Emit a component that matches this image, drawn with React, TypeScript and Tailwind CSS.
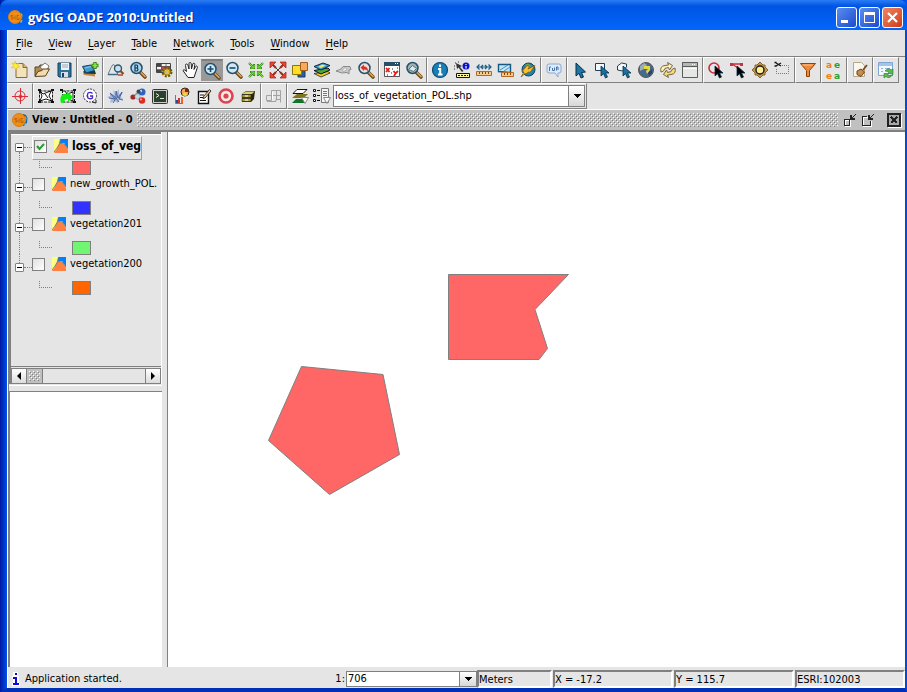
import { ReactNode, useState } from "react";

interface ITool {
  label: string;
  icon: ReactNode;
  pressed?: boolean;
}

interface ILayer {
  name: string;
  color: string;
  active?: boolean;
}

const Lens = ({ children, tint = "#cfe8f3" }: { children?: ReactNode; tint?: string }): JSX.Element => (
  <>
    <path d="M12 12l5 5" stroke="#6b4a20" strokeWidth="3.600" strokeLinecap="round" />
    <path d="M12.500 12l4.500 4.500" stroke="#e0aa5c" strokeWidth="1.600" strokeLinecap="round" />
    <circle cx="8.500" cy="8" r="5.500" fill={tint} stroke="#24506b" strokeWidth="1.500" />
    {children}
  </>
);

const Cursor = ({ fill = "#1d6f9e" }: { fill?: string }): JSX.Element => (
  <path d="M9 6v10l2.500-2.300 2 4.300 2-1-2-4H17z" fill={fill} stroke="#0a2c44" strokeWidth=".8" />
);

const Logo = (): JSX.Element => (
  <svg viewBox="0 0 16 16" className="size-4 shrink-0" aria-hidden="true">
    <path d="M11 2l3 1 1.500 3-.5 5-3 3-3-1z" fill="#1c5f98" />
    <path d="M13 4l1.500 2-.5 3-1.500 1z" fill="#8fd0ee" />
    <circle cx="7" cy="8" r="6.500" fill="#f08c18" stroke="#d97c0c" />
    <path d="M5 6.500H3v1.500h2v2H3M7 6.500v4M11 6.500H9v4h2v-2" fill="none" stroke="#a85c08" strokeWidth=".8" />
    <path d="M12 13l2-2.500.500 1.500-1.500 2z" fill="#7ac4e6" />
  </svg>
);

const fileTools: ITool[] = [
  {
    label: "New project",
    icon: (
      <>
        <path d="M6 3.500h7l4 4v10H6z" fill="#f3e3bb" stroke="#8a6a35" />
        <path d="M13 3.500v4h4" fill="#d3b679" stroke="#8a6a35" />
        <path d="M5 1l1 3 3-1-1.500 2.500L9.500 7 7 7.500 6 10 4.500 7.500 1.500 8 3.500 5.500 2 3l2.500 1z" fill="#ffee3a" stroke="#d6b300" strokeWidth=".5" />
      </>
    ),
  },
  {
    label: "Open project",
    icon: (
      <>
        <path d="M3 16V7h4l1-2h3l5 1v4z" fill="#b18a4c" stroke="#5a4320" />
        <path d="M8 7l5-4 4 3-3 6z" fill="#fff" stroke="#777" />
        <path d="M3 16.500l3-5 4-1 1-1.500h6.500l-4 7z" fill="#f3dcab" stroke="#5a4320" />
      </>
    ),
  },
  {
    label: "Save project",
    icon: (
      <>
        <path d="M4 3h13v14H5l-1-1z" fill="#2f719b" stroke="#17415f" />
        <path d="M7 3h8v7H7z" fill="#eef3f5" />
        <path d="M8 5h6M8 7h6" stroke="#9ab" />
        <path d="M7 12h7v5H7z" fill="#d9dfe2" />
        <path d="M8 13h2v4H8z" fill="#17415f" />
      </>
    ),
  },
];

const addTools: ITool[] = [
  {
    label: "Add layer",
    icon: (
      <>
        <path d="M3 13l1 2 11 1.500v-2.500l-5-2z" fill="#c08a3c" />
        <path d="M3 12l2-2 10 1 1 3-11-.5z" fill="#163247" />
        <path d="M2.500 6.500L11 5l3.500 5.500L6 13z" fill="#3f9aca" stroke="#17415f" />
        <path d="M5 8l6-1.500" stroke="#8fcbe8" />
        <path d="M15 2v7M11.500 5.500h7" stroke="#3b8f17" strokeWidth="3.400" />
        <path d="M15 3v5M12.500 5.500h5" stroke="#93e34a" strokeWidth="1.600" />
      </>
    ),
  },
];

const locatorTools: ITool[] = [
  {
    label: "Locator map",
    icon: (
      <>
        <path d="M2 14.500l3-7 2-3 2 1 1 4 2 5z" fill="#e2e6e8" stroke="#707c82" />
        <path d="M2 14.500h10" stroke="#3e6d86" strokeWidth="1.500" />
        <path d="M12 15h5" stroke="#c0403a" strokeWidth="1.500" />
        <circle cx="12" cy="8.500" r="3.500" fill="#c4e2f0" stroke="#30566c" strokeWidth="1.400" />
        <path d="M14.500 11l3 3" stroke="#7c4f22" strokeWidth="2.200" />
      </>
    ),
  },
  {
    label: "Search by attribute",
    icon: (
      <Lens tint="#a9d6ec">
        <path d="M7 5v6h2q2-1.500 0-3H7h1.800q1.800-1.500 0-3z" fill="none" stroke="#123a5a" strokeWidth="1.200" />
      </Lens>
    ),
  },
];

const tableTools: ITool[] = [
  {
    label: "Table manager",
    icon: (
      <>
        <path d="M2.500 3.500h14v9h-14z" fill="#f1f1f1" stroke="#444" />
        <path d="M3 4h4v3H3zM3 10h4v2H3z" fill="#454545" />
        <path d="M7 6h9v3H7z" fill="#d9415a" />
        <path d="M3 6.500h13M3 9.500h13M7.500 4v8M12 4v8" stroke="#555" strokeWidth=".8" />
        <circle cx="13" cy="12" r="4.300" fill="none" stroke="#6f5a0c" strokeWidth="2.400" strokeDasharray="2 1.400" />
        <circle cx="13" cy="12" r="3.200" fill="#f0cf3a" stroke="#8d720e" />
        <circle cx="13" cy="12" r="1.200" fill="#fff" stroke="#8d720e" strokeWidth=".6" />
      </>
    ),
  },
];

const viewTools: ITool[] = [
  {
    label: "Pan",
    icon: (
      <path
        d="M8 17.500L4 12q-1.500-1.500-.5-2.200 1-.5 3 1.700L5.500 5.500q0-1.500 1-1.500t1.500 1.500l1 3.500V3.500Q9 2.500 10 2.500t1.200 1L11.500 9l1.300-5q.3-1 1.200-.8t.8 1.300L14 9.500l1.700-3q.6-.8 1.300-.3t.4 1.300L15.500 13l-1.500 4.500z"
        fill="#fff"
        stroke="#222"
      />
    ),
  },
  { label: "Zoom in", pressed: true, icon: <Lens><path d="M8.500 5v6M5.500 8h6" stroke="#144c74" strokeWidth="1.600" /></Lens> },
  { label: "Zoom out", icon: <Lens><path d="M5.500 8h6" stroke="#144c74" strokeWidth="1.600" /></Lens> },
  {
    label: "Zoom to full extent",
    icon: (
      <>
        <path d="M3 3l4 4M17 3l-4 4M3 17l4-4M17 17l-4-4M8 4v4H4M12 4v4h4M8 16v-4H4M12 16v-4h4" fill="none" stroke="#3c8f1c" strokeWidth="2.200" />
        <path d="M3 3l4 4M17 3l-4 4M3 17l4-4M17 17l-4-4M8 5v3H5M12 5v3h3M8 15v-3H5M12 15v-3h3" fill="none" stroke="#7fe23a" strokeWidth="1" />
      </>
    ),
  },
  {
    label: "Zoom to selection",
    icon: (
      <>
        <path d="M8 8l4 4M12 8l-4 4" stroke="#444" />
        <path d="M8 8L4 4m12 0l-4 4M8 12l-4 4m12 0l-4-4" stroke="#a32418" strokeWidth="2" />
        <path d="M2 2h6L2 8zM18 2h-6l6 6zM2 18h6l-6-6zM18 18h-6l6-6z" fill="#e8432f" stroke="#a32418" strokeWidth=".7" />
      </>
    ),
  },
  {
    label: "Zoom to layer",
    icon: (
      <>
        <path d="M8 10h7v7H8z" fill="#2560a4" stroke="#173c68" />
        <path d="M2.500 5.500h9v9h-9z" fill="#ffdf24" stroke="#8f7508" />
        <path d="M10.500 2.500h7v8h-7z" fill="#f9a95a" stroke="#a55f1c" />
      </>
    ),
  },
  {
    label: "Zoom manager",
    icon: (
      <>
        <path d="M2 13.500l7 3.500 9-4-2-1.500z" fill="#f0cb2c" stroke="#222" strokeWidth=".8" />
        <path d="M2 10.500l7 3.500 9-4-2-2z" fill="#4fa438" stroke="#112" />
        <path d="M2 6.500L11 3l7 2.500L9 10z" fill="#3e9bd0" stroke="#0d2840" />
        <path d="M6 7l4-2.500 4 1L9 8z" fill="#e9ea6a" />
      </>
    ),
  },
  {
    label: "Previous layer view",
    icon: (
      <>
        <path d="M2 11l5-2 2-2.500h7l1 3-2 .5v4l-2-1.500-5 .5z" fill="#cbcbcb" stroke="#8a8a8a" />
        <path d="M8 10.500l3-3 2 2-3 2z" fill="#eee" stroke="#999" strokeWidth=".7" />
      </>
    ),
  },
  {
    label: "Zoom previous",
    icon: <Lens tint="#f1dcda"><path d="M4.500 7.500l3.500-3v2q4 0 4 5-1.500-2.500-4-2v1.500z" fill="#d03525" /></Lens>,
  },
];

const locateTools: ITool[] = [
  {
    label: "Center view on a point",
    icon: (
      <>
        <path d="M2.500 3.500h15v13h-15z" fill="#fff" stroke="#555" />
        <path d="M2 2h16v4H2z" fill="#264e66" />
        <path d="M13 3h1v1h-1zM15 3h1v1h-1z" fill="#fff" />
        <path d="M4 8l3.500 4M7.500 8L4 12M11.500 11l2 2.500 2.500-2.500M13.500 13.500L12 16" stroke="#e31c1c" strokeWidth="1.800" fill="none" />
        <path d="M9 13h1M10 9h1M15 8h1M5 15h1" stroke="#222" />
      </>
    ),
  },
  {
    label: "Search place",
    icon: <Lens tint="#9db4bb"><path d="M4.500 9.500l4-4 4 3-3 3z" fill="#dfe9e6" stroke="#456" strokeWidth=".8" /></Lens>,
  },
];

const queryTools: ITool[] = [
  {
    label: "Info",
    icon: (
      <>
        <circle cx="10" cy="10" r="7.500" fill="#1880b8" stroke="#0c4a74" strokeWidth="1.200" />
        <path d="M10 4.500V7M8 9h2.200v5M8 14.500h4.500" stroke="#fff" strokeWidth="2" fill="none" />
      </>
    ),
  },
  {
    label: "Quick info",
    icon: (
      <>
        <path d="M4 3l1 6 1.500-1.500L10 12l1.500-1L8 7l2-1z" fill="#333" />
        <path d="M2 6h1M6 2h1M3 3h1M2 9h1" stroke="#222" />
        <circle cx="14" cy="6" r="3.500" fill="#0b12ce" />
        <path d="M14 4v1M14 6v2.500" stroke="#fff" strokeWidth="1.200" />
        <path d="M4.500 13.500h13v4h-13z" fill="#fff799" stroke="#111" />
        <path d="M6 15.500h10" stroke="#111" strokeDasharray="2 1" />
      </>
    ),
  },
  {
    label: "Measure distances",
    icon: (
      <>
        <path d="M3 7h14M5.500 4.500L3 7l2.500 2.500M14.500 4.500L17 7l-2.500 2.500M9 5L7 7l2 2M11 5l2 2-2 2" stroke="#195f89" strokeWidth="1.200" fill="none" />
        <path d="M2.500 11.500h15v4h-15z" fill="#f3c992" stroke="#b5681f" />
        <path d="M5.500 12v2M8.500 12v2M11.500 12v2M14.500 12v2" stroke="#8b4708" />
      </>
    ),
  },
  {
    label: "Measure area",
    icon: (
      <>
        <path d="M2.500 4.500h12v8l-12-1z" fill="#c4e7f7" stroke="#18587f" strokeWidth="1.400" />
        <path d="M4 10l8-5M8 11l6-4" stroke="#4096c4" />
        <path d="M5.500 12.500h12v4h-12z" fill="#f3c992" stroke="#b5681f" />
        <path d="M8.500 13v2M11.500 13v2M14.500 13v2" stroke="#8b4708" />
      </>
    ),
  },
  {
    label: "Hyperlink",
    icon: (
      <>
        <circle cx="10.500" cy="9.500" r="6.500" fill="#2680b0" stroke="#123e5a" />
        <path d="M7 5l3-1.500L13 6l-2 2z" fill="#6aa84a" />
        <path d="M3 17l3-5-2-.5 5-6 2.500 1-1.500 2.500 7-3.500-5 7-1.500-.5L8 14l-1-.5z" fill="#f9c22c" stroke="#83560b" strokeWidth=".8" />
      </>
    ),
  },
];

const chatTools: ITool[] = [
  {
    label: "Geocoding",
    icon: (
      <>
        <path d="M5 4h10q2 0 2 2v5q0 2-2 2h-1v4l-3-4H5q-2 0-2-2V6q0-2 2-2z" fill="#dceafb" stroke="#8ca9cf" />
        <path d="M7 7H5.500v4M8.500 8v2.500h2V7.500M12.500 10.500V7H14v3" stroke="#4971aa" fill="none" />
      </>
    ),
  },
];

const selectTools: ITool[] = [
  { label: "Select by point", icon: <path d="M6 3v13l3-2.700 2 4.700 2.500-1-2-4.500 4-.5z" fill="#1d76a6" stroke="#0a2c44" /> },
  { label: "Select by rectangle", icon: <><path d="M3.500 3.500h9v7h-9z" fill="#f6f9fb" stroke="#17415f" /><Cursor /></> },
  { label: "Select by polygon", icon: <><path d="M3.500 10V6l4-3 5 1v3l-4 4z" fill="#f6f9fb" stroke="#17415f" /><Cursor /></> },
  {
    label: "Select by layer",
    icon: (
      <>
        <circle cx="10" cy="10" r="7.500" fill="#47698a" stroke="#555" />
        <path d="M4 6l4-3 3 2-3 4-4 2z" fill="#98aebf" />
        <path d="M8 6h6v4l-3 4-1-3 2-2H8z" fill="#e9d83c" />
        <path d="M12 13l4-4v4l-3 3z" fill="#2d426b" />
      </>
    ),
  },
  {
    label: "Invert selection",
    icon: (
      <>
        <path d="M3 12q-1.500-6 4-6.500l3.500-.5-1-2.500 5 3-3 4.500-1-2.500Q6 7.500 5.500 11z" fill="#fff3b2" stroke="#766443" />
        <path d="M17 8q1.500 6-4 6.500l-3.500.5 1 2.500-5-3 3-4.500 1 2.500q4.500 0 5-3.500z" fill="#f6dd7a" stroke="#766443" />
      </>
    ),
  },
  {
    label: "Clear selection",
    icon: (
      <>
        <path d="M2.500 2.500h15v15h-15z" fill="#e6e8e5" stroke="#5a5e5c" />
        <path d="M2.500 2.500h15v4h-15z" fill="#b4b8b6" stroke="#5a5e5c" />
        <path d="M3 8.500h14" stroke="#fff" />
        <path d="M12 4.500h4" stroke="#fff" strokeDasharray="1 1" />
      </>
    ),
  },
];

const bufferTools: ITool[] = [
  { label: "Select by circle", icon: <><circle cx="8" cy="8" r="5" fill="none" stroke="#d22a3a" strokeWidth="1.600" /><Cursor fill="#000" /></> },
  {
    label: "Select by polyline",
    icon: (
      <>
        <path d="M14 4H4l9 6" fill="none" stroke="#d22a3a" strokeWidth="1.300" />
        <path d="M12 3h3v3h-3zM2 3h3v3H2z" fill="#c33540" />
        <Cursor fill="#000" />
      </>
    ),
  },
  {
    label: "Select by buffer",
    icon: (
      <>
        <path d="M10 2l3 3h2v2l3 3-3 3v2h-2l-3 3-3-3H5v-2l-3-3 3-3V5h2z" fill="#bd9550" stroke="#8b672b" />
        <circle cx="10" cy="10" r="4" fill="#ffed9a" stroke="#1d1a12" strokeWidth="1.400" />
      </>
    ),
  },
  {
    label: "Clip selection",
    icon: (
      <>
        <path d="M10 5.500h6.500v8h-12V9" fill="none" stroke="#777" strokeDasharray="1 1" />
        <path d="M4 3l5 3M4 6l5-3" stroke="#111" strokeWidth="1.200" />
        <path d="M2.500 2.500h2M2.500 6h2" stroke="#111" strokeWidth="1.600" />
      </>
    ),
  },
];

const filterTools: ITool[] = [
  {
    label: "Filter",
    icon: (
      <>
        <path d="M2.500 3.500h15l-6 7v6h-3v-6z" fill="#ef8a3a" stroke="#8a430b" />
        <path d="M4.500 5h10" stroke="#fbc391" />
      </>
    ),
  },
];

const labelTools: ITool[] = [
  {
    label: "Annotation",
    icon: (
      <g fontFamily="DejaVu Sans" fontWeight="700" fontSize="9">
        <text x="2" y="8" fill="#f57a14">a</text>
        <text x="10" y="8" fill="#2aa02b">e</text>
        <text x="2" y="19" fill="#f57a14">e</text>
        <text x="10" y="19" fill="#2aa02b">a</text>
      </g>
    ),
  },
];

const cleanTools: ITool[] = [
  {
    label: "Clean layer",
    icon: (
      <>
        <path d="M3.500 2.500h8l3 3v11h-11z" fill="#faf7ec" stroke="#b5a98a" />
        <path d="M17 5l-4 5" stroke="#7a4a1d" strokeWidth="1.800" />
        <path d="M7 11l4-2 3.500 3-3.500 4.500-4-2z" fill="#c68e4e" stroke="#6d411a" />
      </>
    ),
  },
];

const refreshTools: ITool[] = [
  {
    label: "Reload layer",
    icon: (
      <>
        <path d="M2.500 2.500h14v13h-14z" fill="#f3f8ff" stroke="#7fa5d2" />
        <path d="M3 3h13v3H3z" fill="#a4c5ea" />
        <path d="M5 8.500h2M5 11.500h2M9 8.500h5" stroke="#8fb0d8" />
        <path d="M9 11q4-4 6-1l2-1v4.500h-5l1-1.500q-2-1-4-1zM17 14.500q-4 5-7 2L8 18v-4.500h4.500l-1 1.500q2 1 5.500-.5z" fill="#5dbb56" stroke="#26762b" strokeWidth=".6" />
      </>
    ),
  },
];

const targetTools: ITool[] = [
  {
    label: "Georeference",
    icon: (
      <g fill="none" stroke="#dc2e36">
        <circle cx="10" cy="10" r="5" />
        <path d="M10.500 2v16M2 10.500h16" />
        <circle cx="10.500" cy="10.500" r="1.500" />
      </g>
    ),
  },
];

const topologyTools: ITool[] = [
  {
    label: "Topology",
    icon: (
      <>
        <path d="M3.500 5h12l1 1v9l-2 1h-11z" fill="#fff" stroke="#111" strokeDasharray="3 1" />
        <path d="M4 5l3 3 5-2 3-1-2 5 3 5-6-2-6 2 2-5zM9 8l3 4" stroke="#111" fill="none" />
        <path d="M2 4h3M15 4h3M2 16h3M15 16h3" stroke="#111" strokeWidth="2" />
      </>
    ),
  },
  {
    label: "Start route",
    icon: (
      <>
        <path d="M4.500 5h12v11h-12z" fill="#fff" stroke="#111" strokeDasharray="3 1" />
        <path d="M7 5l2 3 6-2v9l-5-2" fill="none" stroke="#111" />
        <path d="M2 4h3M15 4h3M15 16h3" stroke="#111" strokeWidth="2" />
        <path d="M3 17q-2-6 2-9h4V5l6 6-5 5v-3q-4 0-4 4z" fill="#11ef11" />
      </>
    ),
  },
  {
    label: "Graph",
    icon: (
      <>
        <circle cx="10" cy="9.500" r="6.500" fill="#fff" stroke="#333" strokeDasharray="2 1" />
        <path d="M12.500 7.500q-2-2-4.500-.5-1.500 2.500 0 5 2.500 1.500 4.500 0v-2H10" fill="none" stroke="#4824c8" strokeWidth="1.400" />
        <path d="M12 16l4 1v-3" stroke="#222" fill="none" />
      </>
    ),
  },
];

const extraTools: ITool[] = [
  {
    label: "Sextante",
    icon: (
      <>
        <path d="M4 7l4 2-1-5 3 3 3-4v5l4-2-3 5 3 1-4 2-1 3-4-2-4 2 1-4-4-2 3-1z" fill="#a9b8d6" />
        <path d="M3 12l6 1-5-6 6 5V5l2 7 4-6-3 7 4 1M7 17l3-5 3 4" stroke="#4a66a0" fill="none" />
      </>
    ),
  },
  {
    label: "Models",
    icon: (
      <>
        <path d="M5 11l7-6M8 11l6 3" stroke="#8899a5" strokeWidth="2" />
        <circle cx="14" cy="6" r="3.500" fill="#2c62c0" />
        <circle cx="13" cy="5" r="1.200" fill="#bcd3ef" />
        <circle cx="10.500" cy="5.500" r="2" fill="#39444c" />
        <circle cx="5" cy="11" r="2.600" fill="#a32a24" />
        <circle cx="9.500" cy="10.500" r="2.600" fill="#c9dbe8" stroke="#7f93a2" strokeWidth=".6" />
        <circle cx="14" cy="14.500" r="3.200" fill="#dd2b20" />
        <circle cx="13" cy="13.500" r="1" fill="#f8b6b0" />
      </>
    ),
  },
  {
    label: "Console",
    icon: (
      <>
        <rect x="2.500" y="3.500" width="15" height="14" rx="1" fill="#c9cdc5" stroke="#333" />
        <path d="M4 5h12v11H4z" fill="#2d4030" />
        <path d="M6 7.500l3 2-3 2M10 12.500h4" stroke="#d8eed2" fill="none" />
      </>
    ),
  },
  {
    label: "Charts",
    icon: (
      <>
        <circle cx="13" cy="6" r="4" fill="#f2a552" stroke="#222" />
        <path d="M13 6V2q4 0 4 4z" fill="#7c2c14" />
        <path d="M13 6l-3 3q3 2 6 0z" fill="#f6d14a" />
        <path d="M3.500 9v8.500H11" stroke="#777" fill="none" />
        <path d="M4 14h2v3H4z" fill="#214aa8" />
        <path d="M6 12h2v5H6z" fill="#d6301e" />
        <path d="M9 11h2v6H9z" fill="#e66a2b" />
      </>
    ),
  },
  {
    label: "Edit notes",
    icon: (
      <>
        <path d="M4.500 5.500h10v12h-10z" fill="#fff" stroke="#111" strokeWidth="1.400" />
        <path d="M6 9h4M6 11.500h3M6 14.500h6" stroke="#111" />
        <path d="M15.500 3.500l-6 7-.500 2 2-.500 6-7z" fill="#e6c987" stroke="#111" strokeWidth=".8" />
      </>
    ),
  },
  {
    label: "Snapping",
    icon: (
      <>
        <circle cx="10" cy="10" r="6.500" fill="#fbe9e9" stroke="#da4450" strokeWidth="2.600" />
        <circle cx="10" cy="10" r="2.600" fill="#da4450" />
      </>
    ),
  },
  {
    label: "Catalog",
    icon: (
      <>
        <path d="M4 8l4-3h9l-1 8-3 3H4z" fill="#2b280d" />
        <path d="M4 8l4-2.500h8.500L14 8z" fill="#d8cf7a" />
        <path d="M4 8.500h9v3H4zM4 12.500h9v3H4z" fill="#a89a2e" stroke="#222" strokeWidth=".6" />
        <path d="M7 10h3M7 14h3" stroke="#fff" />
      </>
    ),
  },
];

const disabledTools: ITool[] = [
  {
    label: "Layout",
    icon: (
      <>
        <path d="M7.500 4.500h9v12M12.500 4.500v9M7.500 4.500v10h-5v-5h5M8 9.500h8M3 15.500h9v-2h4" stroke="#a3a3a3" />
        <path d="M8.500 5.500v8" stroke="#fff" />
      </>
    ),
  },
];

const layerTools: ITool[] = [
  {
    label: "Active layer",
    icon: (
      <>
        <path d="M7 3.500h10l-4 4H3z" fill="#fff" stroke="#111" />
        <path d="M7 8h11l-4 4H2z" fill="#7f741c" />
        <path d="M6 13h9l-1 4H2z" fill="#137427" />
        <path d="M11.500 11.500h7L15 17.500z" fill="#fff" stroke="#888" />
      </>
    ),
  },
  {
    label: "Layer properties",
    icon: (
      <>
        <path d="M1.500 3.500h2v2h-2zM1.500 8.500h2v2h-2zM1.500 13.500h2v2h-2z" fill="#fff" stroke="#111" />
        <path d="M5 4.500h3M5 9.500h3M5 14.500h3" stroke="#111" />
        <path d="M9.500 2.500h7v14h-7z" fill="#f4f4f4" stroke="#777" />
        <path d="M11 5.500h4M11 7.500h4M11 9.500h4" stroke="#777" />
        <path d="M11.500 11.500h7L15 17.500z" fill="#fff" stroke="#888" />
      </>
    ),
  },
];

const topRow = [
  fileTools, addTools, locatorTools, tableTools, viewTools, locateTools, queryTools,
  chatTools, selectTools, bufferTools, filterTools, labelTools, cleanTools, refreshTools,
];
const bottomRow = [targetTools, topologyTools, extraTools, disabledTools];

const menus = ["File", "View", "Layer", "Table", "Network", "Tools", "Window", "Help"];

const layers: ILayer[] = [
  { name: "loss_of_vegetation_POL.shp", color: "#ff6666", active: true },
  { name: "new_growth_POL.shp", color: "#3333ff" },
  { name: "vegetation2010_POL.shp", color: "#70f670" },
  { name: "vegetation2009_POL.shp", color: "#ff6600" },
];
const shownNames = ["loss_of_veg", "new_growth_POL.", "vegetation201", "vegetation200"];

const ToolButton = ({ label, icon, pressed }: ITool): JSX.Element => (
  <button
    type="button"
    aria-label={label}
    className={`flex h-[22px] w-[22px] items-center justify-center ${pressed ? "border border-t-2 border-[#999] border-t-[#808080] bg-[#999]" : ""}`}
  >
    <svg viewBox="0 0 20 20" className="size-5 shrink-0" fill="none" aria-hidden="true">{icon}</svg>
  </button>
);

const ToolGroup = ({ tools, children }: { tools: ITool[]; children?: ReactNode }): JSX.Element => (
  <div className="flex h-[26px] shrink-0 items-center border border-white border-r-[#808080] border-b-[#808080] px-px">
    {tools.map(tool => <ToolButton key={tool.label} {...tool} />)}
    {children}
  </div>
);

const DownArrow = (): JSX.Element => (
  <svg viewBox="0 0 8 4" className="h-1 w-2" shapeRendering="crispEdges" aria-hidden="true">
    <path d="M0 0h8L4 4z" />
  </svg>
);

const Bumps = ({ id, className = "" }: { id: string; className?: string }): JSX.Element => (
  <svg className={className} shapeRendering="crispEdges" aria-hidden="true">
    <pattern id={id} width="4" height="4" patternUnits="userSpaceOnUse">
      <path d="M0 0h1v1H0zM2 2h1v1H2z" fill="#fff" />
      <path d="M1 1h1v1H1zM3 3h1v1H3z" fill="#808080" />
    </pattern>
    <rect width="100%" height="100%" fill={`url(#${id})`} />
  </svg>
);

const TitleBar = (): JSX.Element => (
  <header className="flex h-[30px] shrink-0 items-center rounded-t-lg bg-linear-to-b from-[#2a7df5] via-[#0054e3] via-20% to-[#0366fb] pt-1 pr-1 pl-2">
    <Logo />
    <h1 className="ml-1 flex-1 truncate font-['Open_Sans',sans-serif] text-[13px] leading-4 font-bold text-white [text-shadow:1px_1px_#0a1f8c]">
      gvSIG OADE 2010:Untitled
    </h1>
    <div className="flex gap-0.5">
      <button type="button" aria-label="Minimize" className="size-[21px] rounded-[3px] border border-white bg-linear-to-br from-[#5b8df2] to-[#1c49cc]">
        <svg viewBox="0 0 19 19" aria-hidden="true"><path d="M4 12h7v3H4z" fill="#fff" /></svg>
      </button>
      <button type="button" aria-label="Maximize" className="size-[21px] rounded-[3px] border border-white bg-linear-to-br from-[#5b8df2] to-[#1c49cc]">
        <svg viewBox="0 0 19 19" aria-hidden="true"><path d="M4 4h11v11H4zM5 7v7h9V7z" fill="#fff" fillRule="evenodd" /></svg>
      </button>
      <button type="button" aria-label="Close" className="size-[21px] rounded-[3px] border border-white bg-linear-to-br from-[#ee8462] to-[#d03a10]">
        <svg viewBox="0 0 19 19" aria-hidden="true"><path d="M5 5l9 9M14 5l-9 9" stroke="#fff" strokeWidth="2.200" /></svg>
      </button>
    </div>
  </header>
);

const ViewTitle = (): JSX.Element => (
  <div className="flex h-[23px] shrink-0 items-center border-t border-b-2 border-t-white border-b-[#808080] bg-[#c0c0c0] pr-[3px] pl-1">
    <Logo />
    <h2 className="ml-1 text-[11px] leading-4 font-bold">View : Untitled - 0</h2>
    <Bumps id="title-bumps" className="mx-1 h-3.5 min-w-0 flex-1" />
    <div className="flex items-center gap-0.5">
      <button type="button" aria-label="Minimize view">
        <svg viewBox="0 0 16 16" className="size-4" fill="none" shapeRendering="crispEdges" aria-hidden="true">
          <path d="M3.500 8.500h5v6h-5z" stroke="#fff" />
          <path d="M2.500 7.500h5v6h-5z" stroke="#222" strokeWidth="1.500" />
          <path d="M14 2L9 7M9 3v4h4" stroke="#222" strokeWidth="1.400" />
        </svg>
      </button>
      <button type="button" aria-label="Maximize view">
        <svg viewBox="0 0 16 16" className="size-4" fill="none" shapeRendering="crispEdges" aria-hidden="true">
          <path d="M8 5.500H3.500v9h8V9" stroke="#fff" />
          <path d="M7 4.500H2.500v9h8V9" stroke="#222" strokeWidth="1.500" />
          <path d="M14 2L9 7M9 3v4h4" stroke="#222" strokeWidth="1.400" />
        </svg>
      </button>
      <button type="button" aria-label="Close view" className="ml-2">
        <svg viewBox="0 0 16 16" className="size-4" fill="none" shapeRendering="crispEdges" aria-hidden="true">
          <path d="M2.500 2.500h13v13h-13z" stroke="#fff" />
          <path d="M2 2h12v12H2z" fill="#a8a8a8" stroke="#222" strokeWidth="2" />
          <path d="M5 5l6 6M11 5l-6 6" stroke="#222" strokeWidth="1.600" />
        </svg>
      </button>
    </div>
  </div>
);

const Checkbox = ({ label, checked, onChange }: { label: string; checked: boolean; onChange: () => void }): JSX.Element => (
  <span className="relative block size-[13px] shrink-0">
    <input
      type="checkbox"
      aria-label={label}
      checked={checked}
      onChange={onChange}
      className="block size-[13px] appearance-none border border-[#808080] bg-linear-to-br from-[#e0e0e0] to-white"
    />
    {checked && (
      <svg viewBox="0 0 13 13" className="pointer-events-none absolute inset-0" fill="none" aria-hidden="true">
        <path d="M3 6l2.500 3L10 4" stroke="#2a9a34" strokeWidth="2" />
      </svg>
    )}
  </span>
);

const LayerIcon = (): JSX.Element => (
  <svg viewBox="0 0 14 14" className="size-3.5 shrink-0" aria-hidden="true">
    <path d="M0 0h7L5 6 3 10l-3 3z" fill="#ffff80" />
    <path d="M6 0h8v10L10 4 6 5z" fill="#0080ff" />
    <path d="M0 14l3-4 1-4 3-2 4 2 3 5v3z" fill="#ff8040" />
    <path d="M6.500 0L5 6l-2 3-3 4M5 5q4-2 6 1l3 4" fill="none" stroke="#808080" />
  </svg>
);

const LayerTree = (): JSX.Element => {
  const [visible, setVisible] = useState<string[]>([layers[0].name]);

  const handleToggle = (name: string): void => {
    setVisible(names => names.includes(name) ? names.filter(_n => _n !== name) : [...names, name]);
  };

  return (
    <ul className="h-[235px] shrink-0 overflow-hidden border-t-2 border-b border-[#808080] bg-[#e5e5e5] shadow-[inset_0_1px_#fff]">
      {layers.map((layer, i) => (
        <li key={layer.name} className="flex h-10">
          <div className="flex w-[21px] shrink-0 flex-col">
            <div className={`ml-2 h-[9px] border-l border-dotted ${i ? "border-[#808080]" : "border-transparent"}`} />
            <div className="flex items-center">
              <button
                type="button"
                aria-label={`Collapse ${layer.name}`}
                className="ml-1 flex size-[9px] shrink-0 items-center justify-center rounded-[1px] border border-[#808080] bg-white"
              >
                <span className="h-px w-[5px] bg-black" />
              </button>
              <span className="flex-1 border-t border-dotted border-[#808080]" />
            </div>
            <div className={`ml-2 flex-1 border-l border-dotted ${i < layers.length - 1 ? "border-[#808080]" : "border-transparent"}`} />
          </div>
          <div className="min-w-0 flex-1">
            <div
              className={layer.active
                ? "mt-0.5 mr-[19px] flex h-6 items-center overflow-hidden border border-white border-r-[#a0a0a0] border-b-[#a0a0a0] pb-1 pl-px"
                : "flex h-5 items-center overflow-hidden"}
            >
              <Checkbox label={layer.name} checked={visible.includes(layer.name)} onChange={() => handleToggle(layer.name)} />
              <span className="w-[7px] shrink-0" />
              <LayerIcon />
              <span className={`ml-1 leading-4 whitespace-nowrap ${layer.active ? "text-xs font-bold" : "text-[11px]"}`}>
                {shownNames[i]}
              </span>
            </div>
            <div className={`flex ${layer.active ? "mt-px" : "mt-[7px]"}`}>
              <span className="ml-[7px] h-[7px] w-[13px] border-b border-l border-dotted border-[#808080]" />
              <span className="ml-5 h-3.5 w-[19px] border border-[#808080]" style={{ backgroundColor: layer.color }} />
            </div>
          </div>
        </li>
      ))}
    </ul>
  );
};

const TreeScrollbar = (): JSX.Element => (
  <div className="mt-px flex h-4 shrink-0 border border-[#808080] bg-[#e5e5e5]">
    <button type="button" aria-label="Scroll left" className="flex w-3.5 items-center justify-center bg-linear-to-b from-white to-[#dcdcdc]">
      <svg viewBox="0 0 4 8" className="h-2 w-1" aria-hidden="true"><path d="M4 0v8L0 4z" /></svg>
    </button>
    <div className="w-[17px] border-x border-[#808080] bg-[#c0c0c0] p-0.5">
      <Bumps id="thumb-bumps" className="size-full" />
    </div>
    <div className="flex-1" />
    <button type="button" aria-label="Scroll right" className="flex w-[15px] items-center justify-center border-l border-[#808080] bg-linear-to-b from-white to-[#dcdcdc]">
      <svg viewBox="0 0 4 8" className="h-2 w-1" aria-hidden="true"><path d="M0 0v8l4-4z" /></svg>
    </button>
  </div>
);

const StatusBar = (): JSX.Element => (
  <footer className="flex h-[21px] shrink-0 items-center bg-[#e5e5e5] pt-0.5 pl-1">
    <svg viewBox="0 0 8 14" className="h-3.5 w-2 shrink-0" aria-hidden="true">
      <path d="M1 0h5v4h1v7h1v3H0v-3h1V7H0V4h1z" fill="#fff" />
      <path d="M3 1h2v2H3zM1 5h4v6h2v2H1v-2h2V7H1z" fill="#0a0ae0" />
    </svg>
    <span className="ml-[5px] flex-1 truncate">Application started.</span>
    <label htmlFor="scale" className="mr-px">1:</label>
    <input id="scale" defaultValue="706" className="h-4 w-[114px] border border-[#808080] bg-white px-px outline-none" />
    <button type="button" aria-label="Scale list" className="flex h-4 w-[17px] items-center justify-center border border-l-0 border-[#808080] bg-linear-to-b from-white to-[#d8d8d8]">
      <DownArrow />
    </button>
    <span className="h-[18px] w-[75px] border-2 border-white border-t-[#808080] border-l-[#808080] leading-4">Meters</span>
    <span className="ml-px h-[18px] w-[120px] border-2 border-white border-t-[#808080] border-l-[#808080] leading-4">X = -17.2</span>
    <span className="ml-px h-[18px] w-[120px] border-2 border-white border-t-[#808080] border-l-[#808080] leading-4">Y = 115.7</span>
    <span className="ml-px h-[18px] w-[110px] border-2 border-white border-t-[#808080] border-l-[#808080] leading-4">ESRI:102003</span>
  </footer>
);

export default function App(): JSX.Element {
  return (
    <div className="flex h-screen flex-col overflow-hidden bg-linear-to-r from-[#0018a0] to-[#0050f0] to-[7px] font-['DejaVu_Sans_Condensed','DejaVu_Sans',sans-serif] text-[11px] leading-4 text-black">
      <TitleBar />
      <div className="flex min-h-0 flex-1 flex-col border-r-2 border-b-4 border-l-7 border-transparent border-r-[#0846dc] border-b-[#0030b8]">
        <div className="flex min-h-0 flex-1 flex-col border-l border-white bg-[#e5e5e5]">
          <nav className="flex h-[26px] shrink-0 items-center gap-4 pt-0.5 pl-2">
            {menus.map(menu => (
              <button key={menu} type="button">
                <span className="underline underline-offset-2">{menu[0]}</span>
                {menu.slice(1)}
              </button>
            ))}
          </nav>
          <div className="-ml-px border-t border-[#808080]">
            <div className="flex">
              {topRow.map(tools => <ToolGroup key={tools[0].label} tools={tools} />)}
            </div>
            <div className="flex">
              {bottomRow.map(tools => <ToolGroup key={tools[0].label} tools={tools} />)}
              <ToolGroup tools={layerTools}>
                <div className="flex h-[22px] w-[252px] border border-[#808080] bg-white">
                  <select aria-label="Current layer" className="min-w-0 flex-1 appearance-none px-px outline-none">
                    {layers.map(layer => <option key={layer.name}>{layer.name}</option>)}
                  </select>
                  <span className="pointer-events-none flex w-4 items-center justify-center border-l border-[#808080] bg-linear-to-b from-white to-[#d8d8d8]">
                    <DownArrow />
                  </span>
                </div>
              </ToolGroup>
            </div>
          </div>
          <ViewTitle />
          <main className="flex min-h-0 flex-1 border-l border-[#808080]">
            <aside className="flex w-[158px] shrink-0 flex-col pr-[5px]">
              <div className="flex shrink-0 flex-col border-r border-l-2 border-r-white border-l-[#808080]">
                <LayerTree />
                <TreeScrollbar />
              </div>
              <div className="mt-px h-[7px] shrink-0 border-t border-b border-t-white border-b-[#808080]" />
              <div className="flex-1 border-l border-[#808080] bg-white" />
            </aside>
            <section aria-label="Map" className="min-w-0 flex-1 overflow-hidden border-l border-[#808080] bg-white">
              <svg viewBox="168 132 736 535" className="h-[535px] w-[736px]" fill="#ff6666" stroke="#808080" aria-hidden="true">
                <path d="M448.500 274.500h120l-33.500 35 12.500 39-8.500 11h-90.500z" />
                <path d="M301.500 366.500l81.500 8 16.500 80-70 40-61-54z" />
              </svg>
            </section>
          </main>
          <StatusBar />
        </div>
      </div>
    </div>
  );
}
